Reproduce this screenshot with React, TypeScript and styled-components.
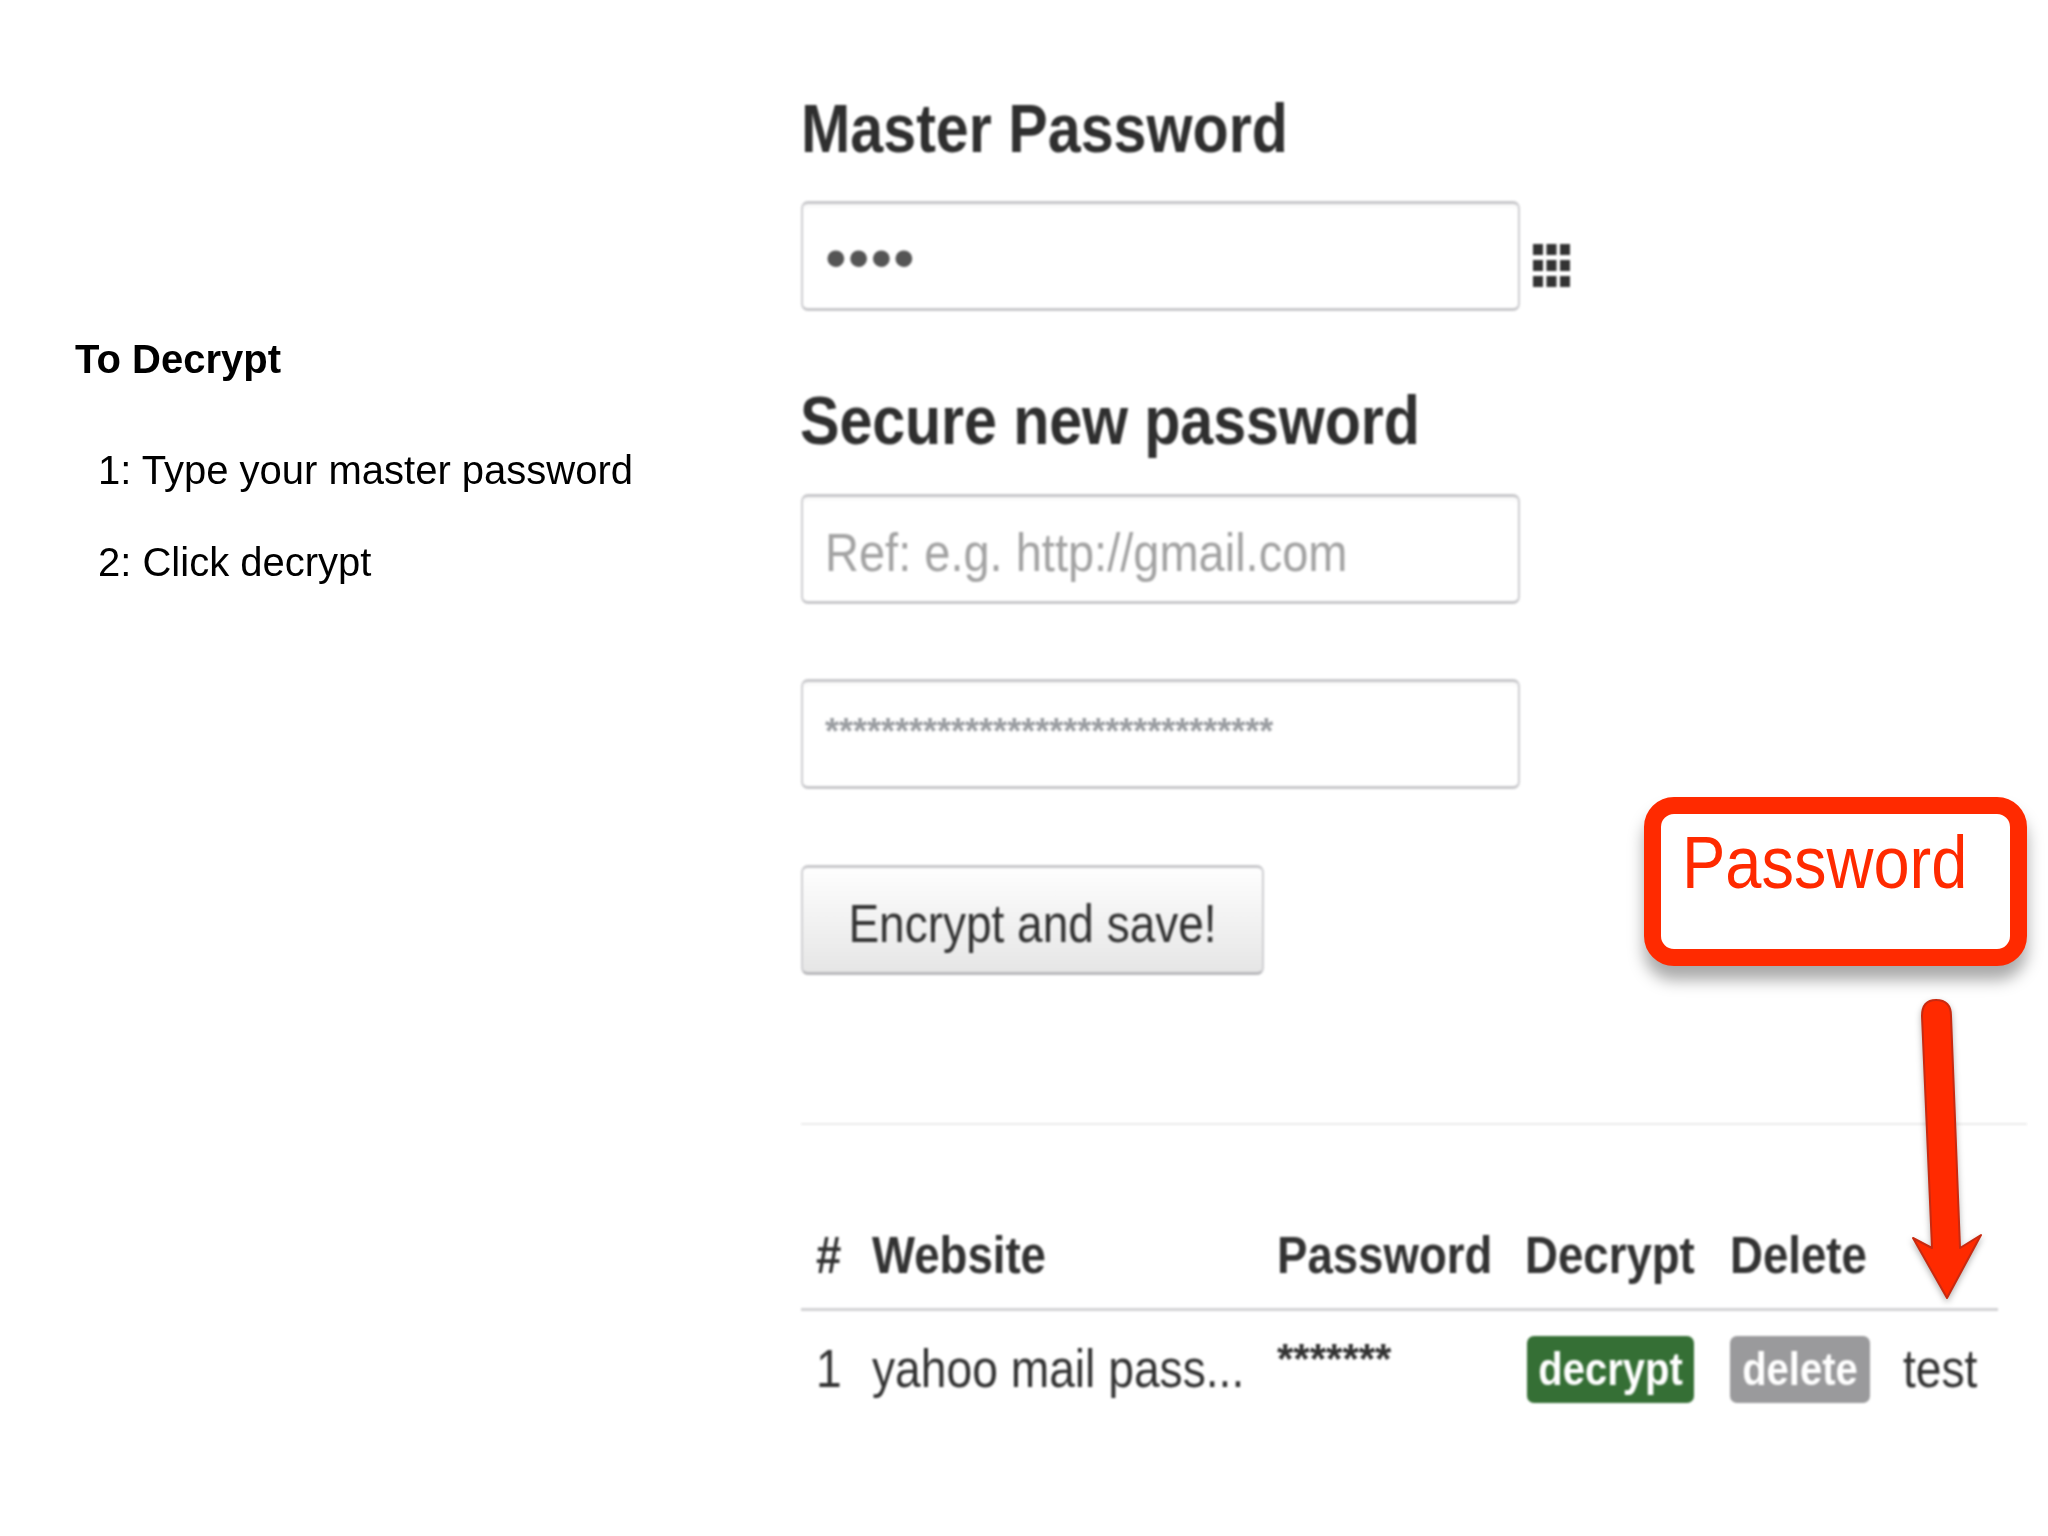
import React from 'react';
import styled, { createGlobalStyle } from 'styled-components';

const GlobalStyle = createGlobalStyle`
  html, body {
    margin: 0;
    padding: 0;
    background: #fff;
    font-family: "Liberation Sans", Arial, sans-serif;
  }
`;

const Page = styled.div`
  position: relative;
  width: 2048px;
  height: 1536px;
  overflow: hidden;
  display: flex;
`;

const Notes = styled.div`
  width: 801px;
  box-sizing: border-box;
  padding: 335px 0 0 75px;
  color: #000;
  font-size: 40px;
  line-height: 48px;
  filter: blur(0.3px);
`;

const NotesTitle = styled.div`
  font-weight: bold;
  margin-bottom: 63px;
`;

const Step = styled.div`
  margin-left: 23px;
  margin-bottom: 44px;
`;

const Panel = styled.div`
  width: 1226px;
  padding-top: 99px;
  color: #333;
  filter: blur(0.8px);
`;

const Tall = styled.span`
  display: inline-block;
  transform: scaleY(1.15);
  transform-origin: center;
  white-space: nowrap;
`;

const Heading = styled.h2<{ $gap: number }>`
  margin: 0 0 ${(p) => p.$gap}px;
  height: 60px;
  font-size: 59.2px;
  line-height: 60px;
  font-weight: bold;
  color: #2f2f2f;
`;

const SecureTitle = styled(Tall)`
  margin-left: -1px;
  letter-spacing: -0.1px;
`;

const FieldRow = styled.div<{ $gap: number }>`
  display: flex;
  margin-bottom: ${(p) => p.$gap}px;
`;

const Field = styled.div`
  width: 719px;
  height: 110px;
  box-sizing: border-box;
  display: flex;
  align-items: center;
  padding-left: 22px;
  background: #fff;
  border: 2px solid #cfcfd2;
  border-top: 3px solid #c8c8cb;
  border-bottom: 3px solid #c8c8cb;
  border-radius: 7px;
  box-shadow: inset 0 3px 3px rgba(0, 0, 0, 0.03);
  font-size: 47px;
  color: #a3a3a3;
`;

const Hint = styled(Tall)`
  margin-top: 7px;
`;

const Dots = styled.span`
  font-size: 62px;
  letter-spacing: 1px;
  color: #555;
  margin-top: 2px;
`;

const Stars = styled.span`
  font-size: 36px;
  font-weight: bold;
  color: #9a9da1;
  white-space: nowrap;
  margin-top: -4px;
`;

const KeypadIcon = styled.svg`
  width: 37px;
  height: 43px;
  margin: 43px 0 0 13px;
  fill: #333;
`;

const SaveButton = styled.button`
  display: block;
  width: 463px;
  height: 110px;
  padding: 8px 0 0;
  font-family: inherit;
  font-size: 46px;
  color: #333;
  background: linear-gradient(#fefefe, #e6e6e6);
  border: 2px solid #cfcfd2;
  border-top: 3px solid #c8c8cb;
  border-bottom: 3px solid #b9b9bc;
  border-radius: 7px;
`;

const Divider = styled.hr`
  margin: 148px 0 0;
  border: 0;
  height: 2px;
  background: #ebebeb;
`;

const Table = styled.div`
  width: 1197px;
`;

const Row = styled.div<{ $head?: boolean; $height: number }>`
  display: grid;
  grid-template-columns: 56px 405px 248px 205px 173px 95px;
  align-items: center;
  box-sizing: border-box;
  height: ${(p) => p.$height}px;
  padding-left: 15px;
  font-size: 46.2px;
  font-weight: ${(p) => (p.$head ? 'bold' : 'normal')};
  border-bottom: ${(p) => (p.$head ? '3px solid #d2d2d4' : '0')};
`;

const HeadCell = styled.div`
  font-size: 45.6px;
  padding-top: 78px;
`;

const MaskCell = styled.div`
  font-size: 42px;
  font-weight: bold;
  margin-top: -20px;
  color: #333;
`;

const Badge = styled.span<{ $bg: string; $w: number; $inset?: number }>`
  display: inline-flex;
  align-items: center;
  justify-content: center;
  width: ${(p) => p.$w}px;
  height: 67px;
  margin-left: ${(p) => p.$inset ?? 0}px;
  box-sizing: border-box;
  border-radius: 7px;
  background: ${(p) => p.$bg};
  color: #fff;
  font-size: 40px;
  font-weight: bold;
`;

const Callout = styled.div`
  position: absolute;
  left: 1644px;
  top: 797px;
  width: 383px;
  height: 169px;
  box-sizing: border-box;
  padding: 11px 0 0 21px;
  background: #fff;
  border: 17px solid #ff2a00;
  border-radius: 30px;
  box-shadow: 0 14px 16px rgba(0, 0, 0, 0.34);
  color: #ff2a00;
  font-size: 65px;
  line-height: 76px;
  filter: blur(0.6px);
`;

const ArrowMark = styled.svg`
  position: absolute;
  left: 1900px;
  top: 990px;
  width: 100px;
  height: 330px;
  filter: drop-shadow(0 3px 3px rgba(0, 0, 0, 0.3)) blur(0.5px);
`;

const keypad = [0, 13.5, 27].flatMap((x) => [0, 16, 32].map((y) => ({ x, y })));

const App: React.FC = () => (
  <Page>
    <GlobalStyle />
    <Notes>
      <NotesTitle>To Decrypt</NotesTitle>
      <Step>1: Type your master password</Step>
      <Step>2: Click decrypt</Step>
    </Notes>
    <Panel>
      <Heading $gap={42}>
        <Tall>Master Password</Tall>
      </Heading>
      <FieldRow $gap={80}>
        <Field>
          <Dots>••••</Dots>
        </Field>
        <KeypadIcon viewBox='0 0 37 43'>
          {keypad.map((c) => (
            <rect key={`${c.x}-${c.y}`} x={c.x} y={c.y} width='10' height='11' />
          ))}
        </KeypadIcon>
      </FieldRow>
      <Heading $gap={43}>
        <SecureTitle>Secure new password</SecureTitle>
      </Heading>
      <FieldRow $gap={75}>
        <Field>
          <Hint>Ref: e.g. http://gmail.com</Hint>
        </Field>
      </FieldRow>
      <FieldRow $gap={76}>
        <Field>
          <Stars>********************************</Stars>
        </Field>
      </FieldRow>
      <SaveButton>
        <Tall>Encrypt and save!</Tall>
      </SaveButton>
      <Divider />
      <Table>
        <Row $head $height={186}>
          <HeadCell><Tall>#</Tall></HeadCell>
          <HeadCell><Tall>Website</Tall></HeadCell>
          <HeadCell><Tall>Password</Tall></HeadCell>
          <HeadCell><Tall>Decrypt</Tall></HeadCell>
          <HeadCell><Tall>Delete</Tall></HeadCell>
          <HeadCell />
        </Row>
        <Row $height={116}>
          <div><Tall>1</Tall></div>
          <div><Tall>yahoo mail pass...</Tall></div>
          <MaskCell>*******</MaskCell>
          <div><Badge $bg='#356f35' $w={167} $inset={2}><Tall>decrypt</Tall></Badge></div>
          <div><Badge $bg='#9a9a9c' $w={140}><Tall>delete</Tall></Badge></div>
          <div><Tall>test</Tall></div>
        </Row>
      </Table>
    </Panel>
    <Callout>
      <Tall>Password</Tall>
    </Callout>
    <ArrowMark viewBox='0 0 100 330'>
      <path
        d='M22 26 Q22 10 36 10 Q51 10 51 26 L60 258 L81 245 L47 308 L13 248 L32 258 Z'
        fill='#ff2a00'
        stroke='#c92a10'
        strokeWidth='2'
        strokeLinejoin='round'
      />
    </ArrowMark>
  </Page>
);

export default App;
